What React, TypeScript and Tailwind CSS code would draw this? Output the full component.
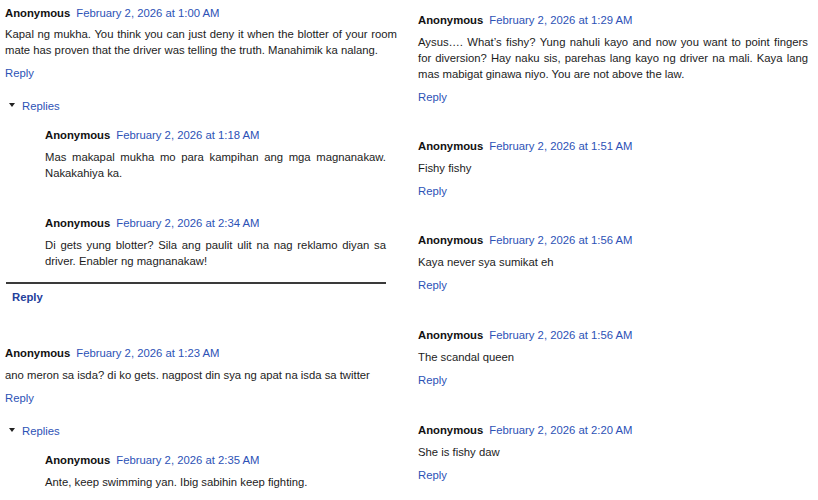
import React from 'react';

interface CommentProps {
    date: string;
    body: string;
    showReply?: boolean;
    className?: string;
    bodyGap?: string;
}

const Comment: React.FC<CommentProps> = ({ date, body, showReply = true, className = '', bodyGap = 'mt-[6px]' }) => (
    <div className={className}>
        <div className="flex items-baseline gap-[6px] whitespace-nowrap">
            <span className="font-bold text-[#111]">Anonymous</span>
            <span className="text-[#2d52b6]">{date}</span>
        </div>
        <p className={`${bodyGap} text-justify`}>{body}</p>
        {showReply && <div className="mt-[7px] text-[#2d52b6]">Reply</div>}
    </div>
);

const RepliesToggle: React.FC<{ className?: string }> = ({ className = '' }) => (
    <div className={`flex items-center ${className}`}>
        <svg width="6" height="4" viewBox="0 0 6 4" className="ml-[4px] mr-[7px] -mt-[3px]">
            <path d="M0 0 L6 0 L3 4 Z" fill="#222" />
        </svg>
        <span className="text-[#2d52b6]">Replies</span>
    </div>
);

const rightComments = [
    { date: 'February 2, 2026 at 1:51 AM', body: 'Fishy fishy', gap: 'mt-[33px]' },
    { date: 'February 2, 2026 at 1:56 AM', body: 'Kaya never sya sumikat eh', gap: 'mt-[33px]' },
    { date: 'February 2, 2026 at 1:56 AM', body: 'The scandal queen', gap: 'mt-[34px]' },
    { date: 'February 2, 2026 at 2:20 AM', body: 'She is fishy daw', gap: 'mt-[34px]' },
];

export default function App() {
    return (
        <div className="w-[818px] h-[500px] overflow-hidden bg-white font-['Liberation_Sans',Arial,sans-serif] text-[11.3px] leading-4 text-[#1c1c1c]">
            <div className="flex gap-[21px] pl-[5px]">
                {/* left column */}
                <div className="w-[392px] shrink-0 pt-[5px]">
                    <Comment
                        bodyGap="mt-[5px]"
                        date="February 2, 2026 at 1:00 AM"
                        body="Kapal ng mukha. You think you can just deny it when the blotter of your room mate has proven that the driver was telling the truth. Manahimik ka nalang."
                    />
                    <RepliesToggle className="mt-[17px]" />
                    <div className="ml-[40px] mr-[11px] mt-[13px]">
                        <Comment
                            date="February 2, 2026 at 1:18 AM"
                            body="Mas makapal mukha mo para kampihan ang mga magnanakaw. Nakakahiya ka."
                            showReply={false}
                        />
                        <Comment
                            date="February 2, 2026 at 2:34 AM"
                            body="Di gets yung blotter? Sila ang paulit ulit na nag reklamo diyan sa driver. Enabler ng magnanakaw!"
                            showReply={false}
                            className="mt-[34px]"
                        />
                    </div>
                    <div className="ml-[1px] mr-[11px] mt-[13px] border-t-2 border-[#3a3a3a]" />
                    <div className="ml-[7px] mt-[5px] font-bold text-[#23409c]">Reply</div>

                    <Comment
                        className="mt-[40px]"
                        date="February 2, 2026 at 1:23 AM"
                        body="ano meron sa isda? di ko gets. nagpost din sya ng apat na isda sa twitter"
                    />
                    <RepliesToggle className="mt-[17px]" />
                    <div className="ml-[40px] mr-[11px] mt-[13px]">
                        <Comment
                            date="February 2, 2026 at 2:35 AM"
                            body="Ante, keep swimming yan. Ibig sabihin keep fighting."
                            showReply={false}
                        />
                    </div>
                </div>

                {/* right column */}
                <div className="w-[390px] shrink-0 pt-[12px]">
                    <Comment
                        date="February 2, 2026 at 1:29 AM"
                        body="Aysus…. What’s fishy? Yung nahuli kayo and now you want to point fingers for diversion? Hay naku sis, parehas lang kayo ng driver na mali. Kaya lang mas mabigat ginawa niyo. You are not above the law."
                    />
                    {rightComments.map((c, i) => (
                        <Comment key={i} className={c.gap} date={c.date} body={c.body} />
                    ))}
                </div>
            </div>
        </div>
    );
}
